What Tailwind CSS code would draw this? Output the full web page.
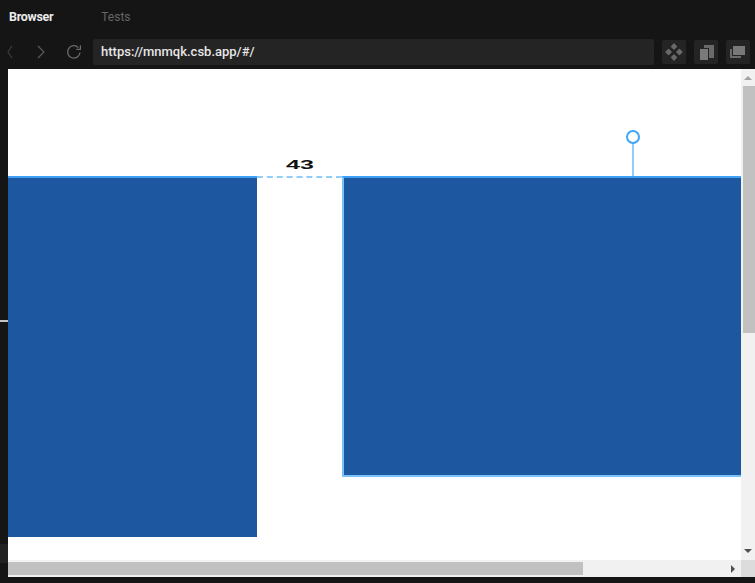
<!DOCTYPE html>
<html lang="en">
<head>
<meta charset="UTF-8">
<title>Browser</title>
<script src="https://cdn.jsdelivr.net/npm/@tailwindcss/browser@4"></script>
</head>
<body class="w-[755px] h-[583px] overflow-hidden bg-[#151515] font-['Roboto',sans-serif]">
  <!-- tabs -->
  <div class="h-[34px] flex items-center pl-[9px] text-[12px]">
    <span class="text-[#ececec] tracking-[-0.3px] text-[12.5px] font-bold">Browser</span>
    <span class="ml-[48px] text-[#666666]">Tests</span>
  </div>
  <!-- address bar -->
  <div class="h-[35px] pt-[1px] flex items-center">
    <svg class="ml-[7px] w-[6px] h-[14px] shrink-0" viewBox="0 0 6 14" fill="none" stroke="#3c3c3c" stroke-width="1.2"><path d="M5 1 L1 7 L5 13"/></svg>
    <svg class="ml-[24px] w-[8px] h-[14px] shrink-0" viewBox="0 0 8 14" fill="none" stroke="#5a5a5a" stroke-width="1.2"><path d="M1 1 L7 7 L1 13"/></svg>
    <svg class="ml-[21px] w-[16px] h-[16px] shrink-0" viewBox="0 0 16 16" fill="none" stroke="#6a6a6a" stroke-width="1.3"><path d="M14 8.5 A6.2 6.2 0 1 1 12.3 3.6"/><path d="M14.4 1.2 V5.4 H10.2" stroke-width="1.2"/></svg>
    <div class="ml-[11px] w-[561px] h-[26px] shrink-0 rounded-[2px] bg-[#242424] flex items-center pl-[8px] text-[13px] font-medium text-[#e6e6e6]">https://mnmqk.csb.app/#/</div>
    <div class="ml-[8px] w-[24px] h-[24px] shrink-0 rounded-[2px] bg-[#242424]">
      <svg class="w-[24px] h-[24px]" viewBox="0 0 24 24" fill="#6a6a6a" stroke="#6a6a6a" stroke-width="1.2" stroke-linejoin="round"><path d="M12 4 L14.6 6.6 L12 9.2 L9.4 6.6 Z"/><path d="M12 14.8 L14.6 17.4 L12 20 L9.4 17.4 Z"/><path d="M6.6 9.4 L9.2 12 L6.6 14.6 L4 12 Z"/><path d="M17.4 9.4 L20 12 L17.4 14.6 L14.8 12 Z"/></svg>
    </div>
    <div class="ml-[8px] w-[24px] h-[24px] shrink-0 rounded-[2px] bg-[#242424]">
      <svg class="w-[24px] h-[24px]" viewBox="0 0 24 24"><path d="M10 5 H20 V18 H15 V8 H10 Z" fill="#6a6a6a"/><path d="M6 9 H14 V20 H6 Z" fill="#7a7a7a"/></svg>
    </div>
    <div class="ml-[8px] w-[24px] h-[24px] shrink-0 rounded-[2px] bg-[#242424]">
      <svg class="w-[24px] h-[24px]" viewBox="0 0 24 24"><path d="M7 6 H19 V15 H7 Z" fill="#787878"/><path d="M4 9 H6 V16 H15 V18 H4 Z" fill="#6a6a6a"/></svg>
    </div>
  </div>
  <!-- preview -->
  <div class="flex h-[508px]">
    <div class="w-[8px] shrink-0 relative">
      <div class="absolute left-0 top-[251px] w-[8px] h-[2px] bg-[#c4c4c4]"></div>
      <div class="absolute left-0 top-[475px] w-[8px] h-[19px] bg-[#222222]"></div>
    </div>
    <div class="flex-1 flex flex-col">
      <div class="flex h-[491px]">
        <div class="relative w-[733px] bg-white overflow-hidden">
          <!-- boxes on the canvas -->
          <div class="absolute left-0 top-[107px] w-[249px] h-[361px] bg-[#1c57a0] border-t-2 border-[#3d9ff5]"></div>
          <div class="absolute left-[334px] top-[107px] w-[399px] h-[301px] bg-[#1c57a0] border-t-2 border-l-2 border-b-2 border-t-[#3d9ff5] border-l-[#7cc2fa] border-b-[#7cc2fa]"></div>
          <!-- distance guide -->
          <div class="absolute left-[249px] top-[107px] w-[85px] border-t-2 border-dashed border-[#90cdfb]"></div>
          <span class="absolute left-[278px] top-[88px] text-[12.5px] leading-[16px] font-bold text-[#111111] font-['Liberation_Sans',sans-serif] scale-x-[2] origin-left">43</span>
          <!-- rotate handle -->
          <div class="absolute left-[624px] top-[74px] w-[2px] h-[33px] bg-[#90cdfb]"></div>
          <div class="absolute left-[618px] top-[61px] w-[14px] h-[14px] rounded-full border-2 border-[#3fa5f8] bg-white"></div>
        </div>
        <!-- vertical scrollbar -->
        <div class="w-[14px] bg-[#f1f1f1] flex flex-col items-center">
          <div class="h-[17px] flex items-center justify-center"><div class="w-0 h-0 border-x-[4px] border-x-transparent border-b-[4px] border-b-[#a3a3a3]"></div></div>
          <div class="w-[12px] ml-[2px] h-[247px] bg-[#c1c1c1]"></div>
          <div class="flex-1 flex items-end pb-[7px]"><div class="w-0 h-0 border-x-[4px] border-x-transparent border-t-[4px] border-t-[#505050]"></div></div>
        </div>
      </div>
      <!-- horizontal scrollbar -->
      <div class="flex h-[17px]">
        <div class="w-[733px] bg-[#f1f1f1] flex items-center justify-between pr-[6px]">
          <div class="w-[575px] h-[13px] bg-[#c1c1c1]"></div>
          <div class="w-0 h-0 border-y-[4px] border-y-transparent border-l-[4px] border-l-[#505050]"></div>
        </div>
        <div class="w-[14px] bg-[#dcdcdc]"></div>
      </div>
    </div>
  </div>
</body>
</html>
